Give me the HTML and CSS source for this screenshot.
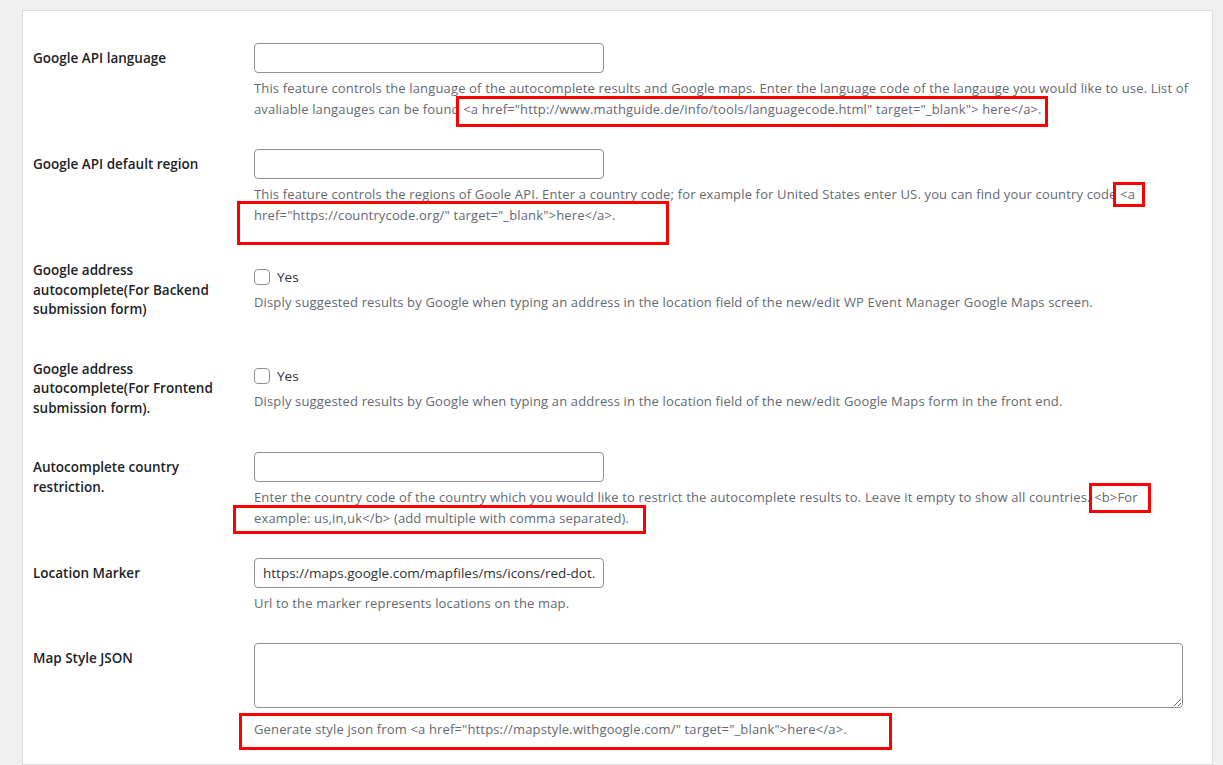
FILE: index.html
```html
<!DOCTYPE html>
<html>
<head>
<meta charset="utf-8">
<link rel="stylesheet" href="styles.css">
</head>
<body>
<div class="panel">
  <table class="form-table">
    <tr>
      <th>Google API language</th>
      <td>
        <input type="text" class="regular-text" value="">
        <p class="description">This feature controls the language of the autocomplete results and Google maps. Enter the language code of the langauge you would like to use. List of avaliable langauges can be found &lt;a href="http://www.mathguide.de/info/tools/languagecode.html" target="_blank"&gt; here&lt;/a&gt;.</p>
      </td>
    </tr>
    <tr>
      <th>Google API default region</th>
      <td>
        <input type="text" class="regular-text" value="">
        <p class="description">This feature controls the regions of Goole API. Enter a country code; for example for United States enter US. you can find your country code &lt;a href="https://countrycode.org/" target="_blank"&gt;here&lt;/a&gt;.</p>
      </td>
    </tr>
    <tr>
      <th>Google address autocomplete(For Backend submission form)</th>
      <td>
        <label class="check"><span class="box"></span><span>Yes</span></label>
        <p class="description">Disply suggested results by Google when typing an address in the location field of the new/edit WP Event Manager Google Maps screen.</p>
      </td>
    </tr>
    <tr>
      <th>Google address autocomplete(For Frontend submission form).</th>
      <td>
        <label class="check"><span class="box"></span><span>Yes</span></label>
        <p class="description">Disply suggested results by Google when typing an address in the location field of the new/edit Google Maps form in the front end.</p>
      </td>
    </tr>
    <tr>
      <th>Autocomplete country restriction.</th>
      <td>
        <input type="text" class="regular-text" value="">
        <p class="description">Enter the country code of the country which you would like to restrict the autocomplete results to. Leave it empty to show all countries. &lt;b&gt;For example: us,in,uk&lt;/b&gt; (add multiple with comma separated).</p>
      </td>
    </tr>
    <tr>
      <th>Location Marker</th>
      <td>
        <input type="text" class="regular-text" value="https://maps.google.com/mapfiles/ms/icons/red-dot.png">
        <p class="description">Url to the marker represents locations on the map.</p>
      </td>
    </tr>
    <tr>
      <th>Map Style JSON</th>
      <td>
        <textarea class="large-text"></textarea>
        <p class="description after-area">Generate style json from &lt;a href="https://mapstyle.withgoogle.com/" target="_blank"&gt;here&lt;/a&gt;.</p>
      </td>
    </tr>
  </table>
</div>
<div class="mark m1"></div>
<div class="mark m2a"></div>
<div class="mark m2b"></div>
<div class="mark m3a"></div>
<div class="mark m3b"></div>
<div class="mark m4"></div>
</body>
</html>
```
FILE: styles.css
```css
* { box-sizing: border-box; }
html, body { height: 100%; }
body {
  margin: 0;
  background: #f0f0f1;
  font-family: "Open Sans", "Noto Sans", "Liberation Sans", sans-serif;
  color: #3c434a;
  position: relative;
  overflow: hidden;
}
.panel {
  margin: 10px 10px 0 22px;
  height: 755px;
  background: #fff;
  border: 1px solid #dcdcde;
  padding: 17px 10px 0 10px;
}
.form-table {
  border-collapse: collapse;
  width: 100%;
}
.form-table th {
  width: 211px;
  padding: 21px 10px 19px 0;
  text-align: left;
  vertical-align: top;
  font-size: 13.5px;
  line-height: 19.5px;
  font-weight: 600;
  color: #1d2327;
}
.form-table td {
  padding: 15px 10px 14px;
  vertical-align: top;
}
.regular-text {
  display: block;
  width: 350px;
  height: 30px;
  margin: 0;
  padding: 0 8px;
  border: 1px solid #8c8f94;
  border-radius: 4px;
  font-family: inherit;
  font-size: 13.5px;
  color: #2c3338;
  background: #fff;
  outline: none;
}
.large-text {
  display: block;
  width: 99%;
  height: 65px;
  margin: 0;
  border: 1px solid #8c8f94;
  border-radius: 4px;
  font-family: inherit;
  background: #fff;
}
.description {
  margin: 5px 0 0;
  font-size: 13px;
  line-height: 21px;
  letter-spacing: 0.15px;
  color: #646970;
}
.description.after-area { margin-top: 11px; }
.check {
  display: flex;
  align-items: center;
  gap: 7px;
  height: 20px;
  margin-top: 12px;
  font-size: 13.5px;
  color: #2c3338;
}
.box {
  width: 16px;
  height: 16px;
  border: 1px solid #8c8f94;
  border-radius: 4px;
  background: #fff;
}
.mark {
  position: absolute;
  border: 3px solid #ff0000;
}
.m1 { left: 456px; top: 96px; width: 592px; height: 31px; }
.m2a { left: 1113px; top: 182px; width: 32px; height: 25px; }
.m2b { left: 237px; top: 201px; width: 432px; height: 44px; }
.m3a { left: 1089px; top: 483px; width: 62px; height: 30px; }
.m3b { left: 233px; top: 505px; width: 413px; height: 29px; }
.m4 { left: 239px; top: 713px; width: 653px; height: 37px; }
```
